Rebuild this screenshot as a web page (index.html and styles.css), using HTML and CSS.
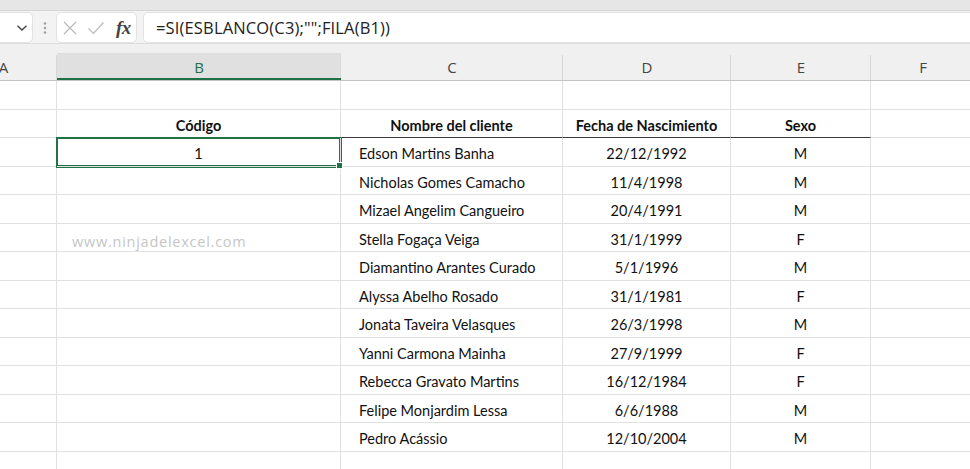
FILE: index.html
```html
<!DOCTYPE html>
<html lang="es">
<head>
<meta charset="utf-8">
<title>Excel - FILA</title>
<link rel="stylesheet" href="styles.css">
</head>
<body>
<div class="app">
  <div class="topstrip"></div>
  <div class="fbar">
    <div class="namebox">
      <svg class="chev" width="12" height="8" viewBox="0 0 12 8"><path d="M1.5 1.8 L6 6 L10.5 1.8" fill="none" stroke="#444" stroke-width="1.4"/></svg>
    </div>
    <div class="grip">
      <svg width="4" height="12" viewBox="0 0 4 12"><circle cx="2" cy="1.5" r="1.2" fill="#9a9a9a"/><circle cx="2" cy="6" r="1.2" fill="#9a9a9a"/><circle cx="2" cy="10.5" r="1.2" fill="#9a9a9a"/></svg>
    </div>
    <div class="fxbox">
      <svg class="ico" width="16" height="16" viewBox="0 0 16 16"><path d="M2 2 L14 14 M14 2 L2 14" fill="none" stroke="#b9b9b9" stroke-width="1.2"/></svg>
      <svg class="ico" width="18" height="16" viewBox="0 0 18 16"><path d="M1.5 8.5 L6.5 13.5 L16.5 2.5" fill="none" stroke="#b9b9b9" stroke-width="1.2"/></svg>
      <span class="fx">fx</span>
    </div>
    <div class="formula">=SI(ESBLANCO(C3);"";FILA(B1))</div>
  </div>

  <div class="colheads">
    <div class="ch">A</div>
    <div class="ch sel">B</div>
    <div class="ch">C</div>
    <div class="ch">D</div>
    <div class="ch">E</div>
    <div class="ch">F</div>
  </div>

  <div class="sheet">
    <div class="row r-odd"><div class="c ca"></div><div class="c cb"></div><div class="c cc"></div><div class="c cd"></div><div class="c ce"></div><div class="c cf"></div></div>
    <div class="row r-even hdr"><div class="c ca"></div><div class="c cb">Código</div><div class="c cc ul">Nombre del cliente</div><div class="c cd ul">Fecha de Nascimiento</div><div class="c ce ul">Sexo</div><div class="c cf"></div></div>
    <div class="row r-odd"><div class="c ca"></div><div class="c cb active">1</div><div class="c cc">Edson Martins Banha</div><div class="c cd">22/12/1992</div><div class="c ce">M</div><div class="c cf"></div></div>
    <div class="row r-even"><div class="c ca"></div><div class="c cb"></div><div class="c cc">Nicholas Gomes Camacho</div><div class="c cd">11/4/1998</div><div class="c ce">M</div><div class="c cf"></div></div>
    <div class="row r-odd"><div class="c ca"></div><div class="c cb"></div><div class="c cc">Mizael Angelim Cangueiro</div><div class="c cd">20/4/1991</div><div class="c ce">M</div><div class="c cf"></div></div>
    <div class="row r-even"><div class="c ca"></div><div class="c cb"></div><div class="c cc">Stella Fogaça Veiga</div><div class="c cd">31/1/1999</div><div class="c ce">F</div><div class="c cf"></div></div>
    <div class="row r-odd"><div class="c ca"></div><div class="c cb"></div><div class="c cc">Diamantino Arantes Curado</div><div class="c cd">5/1/1996</div><div class="c ce">M</div><div class="c cf"></div></div>
    <div class="row r-even"><div class="c ca"></div><div class="c cb"></div><div class="c cc">Alyssa Abelho Rosado</div><div class="c cd">31/1/1981</div><div class="c ce">F</div><div class="c cf"></div></div>
    <div class="row r-odd"><div class="c ca"></div><div class="c cb"></div><div class="c cc">Jonata Taveira Velasques</div><div class="c cd">26/3/1998</div><div class="c ce">M</div><div class="c cf"></div></div>
    <div class="row r-even"><div class="c ca"></div><div class="c cb"></div><div class="c cc">Yanni Carmona Mainha</div><div class="c cd">27/9/1999</div><div class="c ce">F</div><div class="c cf"></div></div>
    <div class="row r-odd"><div class="c ca"></div><div class="c cb"></div><div class="c cc">Rebecca Gravato Martins</div><div class="c cd">16/12/1984</div><div class="c ce">F</div><div class="c cf"></div></div>
    <div class="row r-even"><div class="c ca"></div><div class="c cb"></div><div class="c cc">Felipe Monjardim Lessa</div><div class="c cd">6/6/1988</div><div class="c ce">M</div><div class="c cf"></div></div>
    <div class="row r-odd"><div class="c ca"></div><div class="c cb"></div><div class="c cc">Pedro Acássio</div><div class="c cd">12/10/2004</div><div class="c ce">M</div><div class="c cf"></div></div>
    <div class="row r-even"><div class="c ca"></div><div class="c cb"></div><div class="c cc"></div><div class="c cd"></div><div class="c ce"></div><div class="c cf"></div></div>
    <div class="watermark">www.ninjadelexcel.com</div>
  </div>
</div>
</body>
</html>
```

FILE: styles.css
```css
html, body {
  margin: 0;
  padding: 0;
  background: #ffffff;
}

.app {
  width: 970px;
  height: 469px;
  overflow: hidden;
  position: relative;
  background: #ffffff;
}

.topstrip {
  height: 10px;
  background: #e6e6e6;
  border-bottom: 1px solid #d6d6d6;
}

.fbar {
  height: 33px;
  background: #f3f3f3;
  display: flex;
  align-items: stretch;
  padding-top: 1px;
  box-sizing: border-box;
  border-bottom: 1px solid #dcdcdc;
}

.namebox {
  width: 42px;
  margin-left: -9px;
  background: #ffffff;
  border: 1px solid #e2e2e2;
  border-radius: 0 5px 5px 0;
  display: flex;
  align-items: center;
  justify-content: flex-end;
  padding-right: 4px;
  box-sizing: border-box;
}

.grip {
  width: 23px;
  display: flex;
  align-items: center;
  justify-content: center;
}

.fxbox {
  width: 81px;
  background: #ffffff;
  border: 1px solid #e2e2e2;
  border-radius: 5px;
  display: flex;
  align-items: center;
  gap: 9px;
  padding-left: 5px;
  box-sizing: border-box;
}

.fx {
  font-family: "Liberation Serif", "DejaVu Serif", serif;
  font-style: italic;
  font-weight: bold;
  font-size: 19px;
  color: #444444;
  margin-left: 2px;
  letter-spacing: -0.5px;
}

.formula {
  flex: 1;
  margin-left: 6px;
  margin-right: -10px;
  background: #ffffff;
  border: 1px solid #e2e2e2;
  border-radius: 5px;
  display: flex;
  align-items: center;
  padding-left: 12px;
  font-family: "Open Sans", "Noto Sans", sans-serif;
  font-size: 16.5px;
  letter-spacing: 0.15px;
  color: #222222;
}

.colheads {
  display: flex;
  margin-left: -50px;
  height: 37px;
  padding-top: 9px;
  box-sizing: border-box;
  background: #f0f0f0;
  border-bottom: 1px solid #c4c4c4;
}

.ch {
  height: 27px;
  display: flex;
  align-items: center;
  justify-content: center;
  font-family: "Open Sans", "Noto Sans", sans-serif;
  font-size: 15px;
  color: #444444;
  padding-top: 1px;
  box-sizing: border-box;
  background: linear-gradient(#d8d8d8, #d8d8d8) right bottom / 1px 25px no-repeat;
}

.ch.sel {
  background-color: #e0e0e0;
  color: #1f7145;
  box-shadow: inset 0 -2px 0 #1f7145;
}

.ch:nth-child(1), .c.ca { width: 107px; flex: none; }
.ch:nth-child(2), .c.cb { width: 284px; flex: none; }
.ch:nth-child(3), .c.cc { width: 222px; flex: none; }
.ch:nth-child(4), .c.cd { width: 168px; flex: none; }
.ch:nth-child(5), .c.ce { width: 140px; flex: none; }
.ch:nth-child(6), .c.cf { width: 104px; flex: none; }

.sheet {
  position: relative;
  margin-left: -50px;
}

.row {
  display: flex;
}

.r-odd { height: 29px; }
.r-even { height: 28px; }

.c {
  box-sizing: border-box;
  border-right: 1px solid #e1e1e1;
  border-bottom: 1px solid #e1e1e1;
  display: flex;
  align-items: center;
  justify-content: center;
  padding-top: 3px;
  font-family: "Lato", "Liberation Sans", sans-serif;
  font-size: 14.5px;
  color: #111111;
  white-space: nowrap;
  position: relative;
}

.c.cc {
  justify-content: flex-start;
  padding-left: 18px;
}

.hdr .c {
  font-weight: bold;
}

.hdr .c.cc {
  justify-content: center;
  padding-left: 0;
}

.c.ul {
  border-bottom: 1px solid #3a3a3a;
}

.c.active {
  box-shadow: 0 0 0 1px #217346, inset 0 0 0 1px #217346;
  z-index: 2;
}

.c.active::after {
  content: "";
  position: absolute;
  right: -3px;
  bottom: -3px;
  width: 5px;
  height: 5px;
  background: #217346;
  border: 1px solid #ffffff;
}

.watermark {
  position: absolute;
  left: 122px;
  top: 151px;
  font-family: "Open Sans", "Noto Sans", sans-serif;
  font-size: 14.5px;
  letter-spacing: 0.75px;
  color: #c6c6c6;
}
```
